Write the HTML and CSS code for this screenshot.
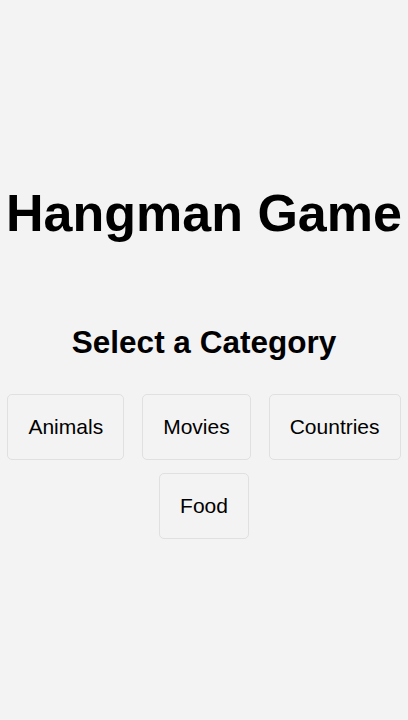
FILE: index.html
```html
<!DOCTYPE html>
<html lang="en">
<head>
    <meta charset="UTF-8">
    <title>Hangman Game</title>
    <link rel="stylesheet" href="styles.css">
</head>
<body>
<div id="game">
    <h1 class="title">Hangman Game</h1>
    <h2 class="subtitle">Select a Category</h2>
    <div class="categories">
        <button class="category">Animals</button>
        <button class="category">Movies</button>
        <button class="category">Countries</button>
        <button class="category">Food</button>
    </div>
</div>
</body>
</html>
```

FILE: styles.css
```css
*{
    margin: 0;
    padding: 0;
    box-sizing: border-box;
}
body{
    background: #f3f3f3;
    font-family: "Liberation Sans", Arial, sans-serif;
    color: #000;
}
#game{
    min-height: 100vh;
    display: flex;
    flex-direction: column;
    justify-content: center;
    align-items: center;
    text-align: center;
}
.title{
    font-size: 52px;
    font-weight: bold;
    margin-top: 2px;
    margin-bottom: 81px;
}
.subtitle{
    font-size: 31.5px;
    font-weight: bold;
    margin-bottom: 33px;
}
.categories{
    width: 100%;
    display: flex;
    flex-wrap: wrap;
    justify-content: center;
    column-gap: 18px;
    row-gap: 13px;
}
.category{
    font-family: inherit;
    font-size: 21px;
    color: #000;
    background: #f3f3f3;
    border: 1px solid #e0e0e0;
    border-radius: 5px;
    padding: 20px 20px;
    cursor: pointer;
}
```
